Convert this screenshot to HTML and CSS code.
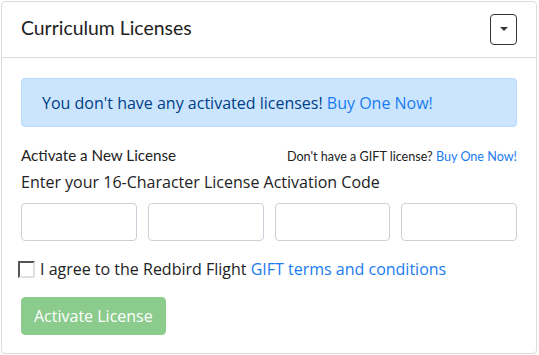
FILE: index.html
```html
<!DOCTYPE html>
<html>
<head>
<meta charset="utf-8">
<link rel="stylesheet" href="styles.css">
</head>
<body>
<div class="card">
  <div class="card-header">
    <h2 class="title">Curriculum Licenses</h2>
    <button class="toggle" type="button"><span class="caret"></span></button>
  </div>
  <div class="card-body">
    <div class="alert"><span>You don't have any activated licenses! <a href="#">Buy One Now!</a></span></div>
    <div class="row-head">
      <span class="subtitle">Activate a New License</span>
      <span class="gift">Don't have a GIFT license? <a href="#">Buy One Now!</a></span>
    </div>
    <div class="label">Enter your 16-Character License Activation Code</div>
    <div class="codes">
      <input class="code" type="text">
      <input class="code" type="text">
      <input class="code" type="text">
      <input class="code" type="text">
    </div>
    <label class="agree"><span class="box"></span><span>I agree to the Redbird Flight <a href="#">GIFT terms and conditions</a></span></label>
    <button class="activate" type="button">Activate License</button>
  </div>
</div>
</body>
</html>
```
FILE: styles.css
```css
html, body { margin: 0; padding: 0; background: #fff; }
body { padding: 1px; font-family: "Open Sans", sans-serif; color: #212529; }
a { color: #1a7cf0; text-decoration: none; }
.card {
  width: 534px;
  height: 351px;
  border: 1px solid #dcdcdc;
  border-radius: 4px;
  box-sizing: content-box;
}
.card-header {
  box-sizing: border-box;
  height: 56px;
  border-bottom: 1px solid #dcdcdc;
  display: flex;
  align-items: center;
  justify-content: space-between;
  padding: 0 19px 2px 19px;
}
.title {
  margin: 0 0 2px 0;
  font-family: Lato, sans-serif;
  font-weight: 400;
  font-size: 19.4px;
  color: #222;
}
.toggle {
  width: 27px;
  height: 31px;
  margin-top: 1px;
  border: 1px solid #333;
  border-radius: 4px;
  background: #fff;
  padding: 0;
  display: flex;
  align-items: center;
  justify-content: center;
}
.caret {
  width: 0; height: 0;
  border-left: 4px solid transparent;
  border-right: 4px solid transparent;
  border-top: 4px solid #333;
}
.card-body { padding: 20px 19px 0 19px; }
.alert {
  height: 49px;
  box-sizing: border-box;
  background: #cce5ff;
  border: 1px solid #b8daff;
  border-radius: 4px;
  color: #004085;
  font-size: 16px;
  display: flex;
  align-items: center;
  padding-left: 20px;
}
.row-head {
  display: flex;
  justify-content: space-between;
  align-items: baseline;
  margin-top: 19px;
}
.subtitle { font-family: Lato, sans-serif; font-size: 15.2px; color: #222; }
.gift { font-family: Lato, sans-serif; font-size: 12.6px; color: #222; }
.label { font-size: 16px; margin-top: 7px; color: #222; }
.codes {
  display: grid;
  grid-template-columns: repeat(4, 1fr);
  gap: 11px;
  margin-top: 10px;
}
.code {
  height: 38px;
  box-sizing: border-box;
  border: 1px solid #ccd1d9;
  border-radius: 4px;
  width: 100%;
  margin: 0;
}
.agree {
  display: flex;
  align-items: center;
  margin-top: 17px;
  margin-left: -3px;
  font-size: 16px;
  color: #222;
}
.box {
  width: 13px; height: 13px;
  border: 2px solid;
  border-top-color: #555; border-left-color: #555;
  border-bottom-color: #e0e0e0; border-right-color: #e0e0e0;
  margin-right: 5px;
  background: #fff;
}
.activate {
  margin-top: 17px;
  height: 38px;
  padding: 0 12px;
  font-family: "Open Sans", sans-serif;
  font-size: 16px;
  color: #fff;
  background: #8bcb8c;
  border: 1px solid #8bcb8c;
  border-radius: 4px;
}
```
